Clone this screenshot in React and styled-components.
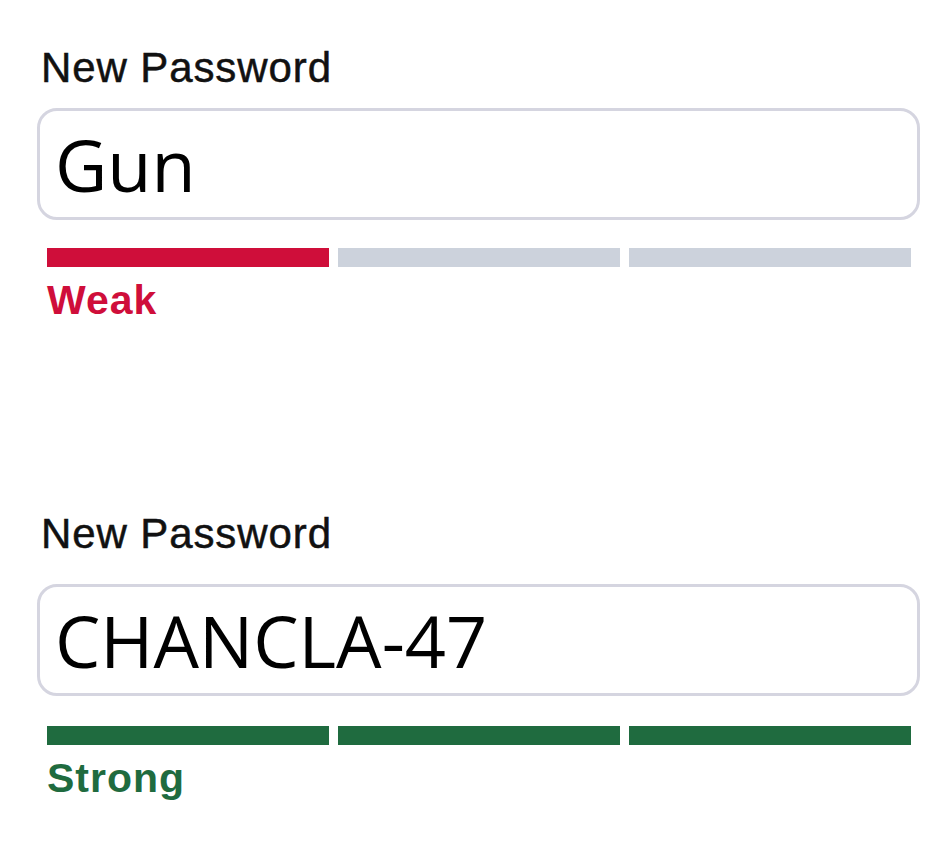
import React from 'react';
import styled, { createGlobalStyle } from 'styled-components';

const GlobalStyle = createGlobalStyle`
  body {
    margin: 0;
    background: #ffffff;
    font-family: 'Liberation Sans', Arial, sans-serif;
  }
`;

const Page = styled.div`
  width: 950px;
  height: 843px;
  box-sizing: border-box;
  padding: 44px 0 0 37px;
  background: #ffffff;
  overflow: hidden;
`;

const Field = styled.section`
  width: 883px;
  margin-bottom: ${({ $after }) => $after}px;
`;

const Label = styled.div`
  margin-left: 4px;
  font-family: 'Liberation Sans', Arial, sans-serif;
  font-size: 42px;
  line-height: 48px;
  color: #111;
  letter-spacing: 0.9px;
  -webkit-text-stroke: 0.5px #111;
`;

const Input = styled.div`
  margin-top: ${({ $gap }) => $gap}px;
  height: 112px;
  box-sizing: border-box;
  border: 3px solid #d5d5e0;
  border-radius: 20px;
  display: flex;
  align-items: center;
  padding-left: 15px;
  font-family: 'Open Sans', 'Noto Sans', sans-serif;
  font-size: 72px;
  color: #000;
`;

const Meter = styled.div`
  margin: ${({ $gap }) => $gap}px 9px 0 10px;
  display: grid;
  grid-template-columns: repeat(3, 1fr);
  gap: 9px;
`;

const Segment = styled.div`
  height: 19px;
  background: ${({ $color }) => $color};
`;

const Strength = styled.div`
  margin: 10px 0 0 10px;
  font-family: 'Liberation Sans', Arial, sans-serif;
  font-weight: 700;
  font-size: 41px;
  line-height: 46px;
  letter-spacing: 1px;
  color: ${({ $color }) => $color};
`;

const GREY = '#ccd2dc';

function PasswordField({ value, level, label, color, labelGap, meterGap, after }) {
  return (
    <Field $after={after}>
      <Label>New Password</Label>
      <Input $gap={labelGap}>{value}</Input>
      <Meter $gap={meterGap}>
        {[0, 1, 2].map((i) => (
          <Segment key={i} $color={i < level ? color : GREY} />
        ))}
      </Meter>
      <Strength $color={color}>{label}</Strength>
    </Field>
  );
}

export default function App() {
  return (
    <>
      <GlobalStyle />
      <Page>
        <PasswordField
          value="Gun"
          level={1}
          label="Weak"
          color="#cf0e3a"
          labelGap={16}
          meterGap={28}
          after={187}
        />
        <PasswordField
          value="CHANCLA-47"
          level={3}
          label="Strong"
          color="#1f6b3f"
          labelGap={26}
          meterGap={30}
          after={0}
        />
      </Page>
    </>
  );
}
